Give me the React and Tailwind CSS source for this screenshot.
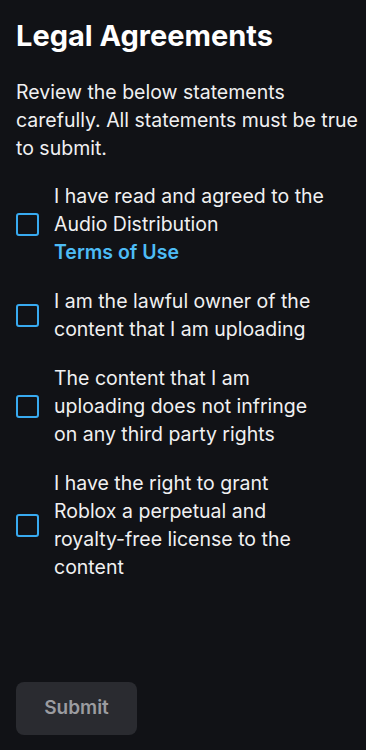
import { useState } from 'react';

const statements = [
  { id: 'terms', text: 'I have read and agreed to the Audio Distribution', link: 'Terms of Use' },
  { id: 'owner', text: 'I am the lawful owner of the content that I am uploading' },
  { id: 'rights', text: 'The content that I am uploading does not infringe on any third party rights' },
  { id: 'license', text: 'I have the right to grant Roblox a perpetual and royalty-free license to the content' },
];

export default function App() {
  const [checked, setChecked] = useState({});
  const allChecked = statements.every(s => checked[s.id]);

  return (
    <div
      className="min-h-[750px] bg-[#111216] text-white pl-4 pr-2 pt-[18px] pb-[15px] flex flex-col"
      style={{ fontFamily: 'Inter, "Noto Sans", sans-serif' }}
    >
      <h1 className="text-[29px] leading-[36px] font-bold">Legal Agreements</h1>

      <p className="mt-[24px] text-[19.5px] leading-[28px] text-[#f0f0f1]">
        Review the below statements carefully. All statements must be true to submit.
      </p>

      <div className="mt-[20px] flex flex-col gap-[21px]">
        {statements.map(s => (
          <label key={s.id} className="flex items-center gap-[15px] cursor-pointer">
            <span
              onClick={() => setChecked(c => ({ ...c, [s.id]: !c[s.id] }))}
              className={`w-[23px] h-[23px] flex-shrink-0 rounded-[3px] border-[2.5px] border-[#38aaf0] ${checked[s.id] ? 'bg-[#38aaf0]' : ''}`}
            />
            <span className="max-w-[276px] text-[19.5px] leading-[28px] text-[#f0f0f1]">
              {s.text}
              {s.link && (
                <>
                  <br />
                  <a href="#" className="font-semibold text-[#4dbcf5]">{s.link}</a>
                </>
              )}
            </span>
          </label>
        ))}
      </div>

      <div className="mt-auto">
        <button
          disabled={!allChecked}
          className="w-[121px] h-[53px] rounded-lg bg-[#2a2b30] text-[#9b9ca0] text-[19px] font-semibold"
        >
          Submit
        </button>
      </div>
    </div>
  );
}
